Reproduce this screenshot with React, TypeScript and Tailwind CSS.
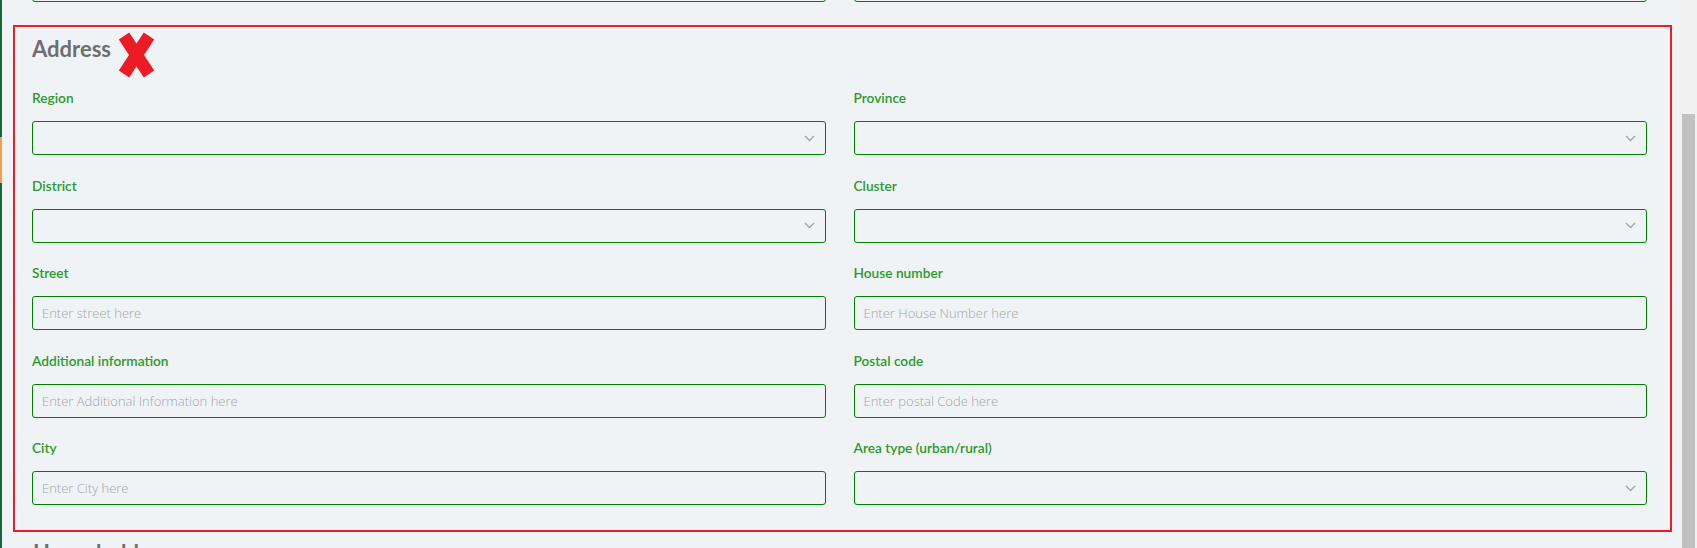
// Address section of a long registration form.
// Two-column grid of labelled inputs / selects inside a red-outlined block.

type Field = {
  label: string;
  kind: "select" | "text";
  placeholder?: string;
};

const ADDRESS_FIELDS: Field[] = [
  { label: "Region", kind: "select" },
  { label: "Province", kind: "select" },
  { label: "District", kind: "select" },
  { label: "Cluster", kind: "select" },
  { label: "Street", kind: "text", placeholder: "Enter street here" },
  { label: "House number", kind: "text", placeholder: "Enter House Number here" },
  {
    label: "Additional information",
    kind: "text",
    placeholder: "Enter Additional Information here",
  },
  { label: "Postal code", kind: "text", placeholder: "Enter postal Code here" },
  { label: "City", kind: "text", placeholder: "Enter City here" },
  { label: "Area type (urban/rural)", kind: "select" },
];

const LATO = "font-['Lato','Liberation_Sans',sans-serif]";

export default function App() {
  return (
    <div className="flex h-[548px] w-[1697px] overflow-hidden bg-[#eff3f6]">
      {/* side rail of the app shell */}
      <div className="flex w-[2px] shrink-0 flex-col bg-[#17673a]">
        <div className="h-[137px]" />
        <div className="h-[46px] bg-[#f3a04c]" />
      </div>

      <main className="min-w-0 flex-1">
        {/* tail of the previous row, scrolled mostly out of view */}
        <div className="ml-[11px] mr-[8px] flow-root h-[2px] pl-[19px] pr-[25px]">
          <div className="-mt-[32px] grid grid-cols-2 gap-x-[28px]">
            <div className="h-[34px] rounded-[3px] border border-[#008000]" />
            <div className="h-[34px] rounded-[3px] border border-[#008000]" />
          </div>
        </div>

        <section className="mt-[23px] ml-[11px] mr-[8px] border-2 border-[#ee1c25] pt-[9px] pr-[23px] pb-[25px] pl-[17px]">
          <div className="mb-[28px] flex h-[26px] items-start gap-[7px]">
            <h2 className={`${LATO} text-[22px] leading-[26px] font-bold text-[#6f6f6f]`}>
              Address
            </h2>
            <RedCross />
          </div>

          <div className="grid grid-cols-2 gap-x-[28px] gap-y-[22.5px]">
            {ADDRESS_FIELDS.map((f) => (
              <FormField key={f.label} field={f} />
            ))}
          </div>
        </section>

        <h2 className={`${LATO} mt-[8px] ml-[31px] text-[22px] leading-[26px] font-bold text-[#6f6f6f]`}>
          Household
        </h2>
      </main>

      {/* browser scrollbar */}
      <div className="flex w-[17px] shrink-0 flex-col bg-[#f1f1f1] px-[2px]">
        <div className="h-[114px]" />
        <div className="flex-1 bg-[#c1c1c1]" />
      </div>
    </div>
  );
}

function FormField({ field }: { field: Field }) {
  return (
    <div>
      <label
        className={`${LATO} mb-[15px] block h-4 text-[13.7px] leading-4 font-semibold text-[#2b9a2b]`}
      >
        {field.label}
      </label>
      {field.kind === "select" ? (
        <div className="flex h-[34px] items-center justify-end rounded-[3px] border border-[#008000] pr-[10px]">
          <svg width="11" height="7" viewBox="0 0 11 7" fill="none">
            <polyline
              points="1,1 5.5,5.5 10,1"
              stroke="#a2a2a2"
              strokeWidth="1.3"
            />
          </svg>
        </div>
      ) : (
        <input
          type="text"
          placeholder={field.placeholder}
          className="block h-[34px] w-full rounded-[3px] border border-[#008000] bg-transparent px-[9px] font-['Open_Sans','Noto_Sans',sans-serif] text-[13px] font-light text-[#333] outline-none placeholder:text-[#a4a4a4]"
        />
      )}
    </div>
  );
}

function RedCross() {
  return (
    <svg
      width="37"
      height="48"
      viewBox="0 0 37 48"
      className="-mt-[5px] shrink-0"
    >
      <line x1="6" y1="5" x2="31" y2="43" stroke="#ed1c24" strokeWidth="12.5" />
      <line x1="31" y1="5" x2="6" y2="43" stroke="#ed1c24" strokeWidth="12.5" />
    </svg>
  );
}
